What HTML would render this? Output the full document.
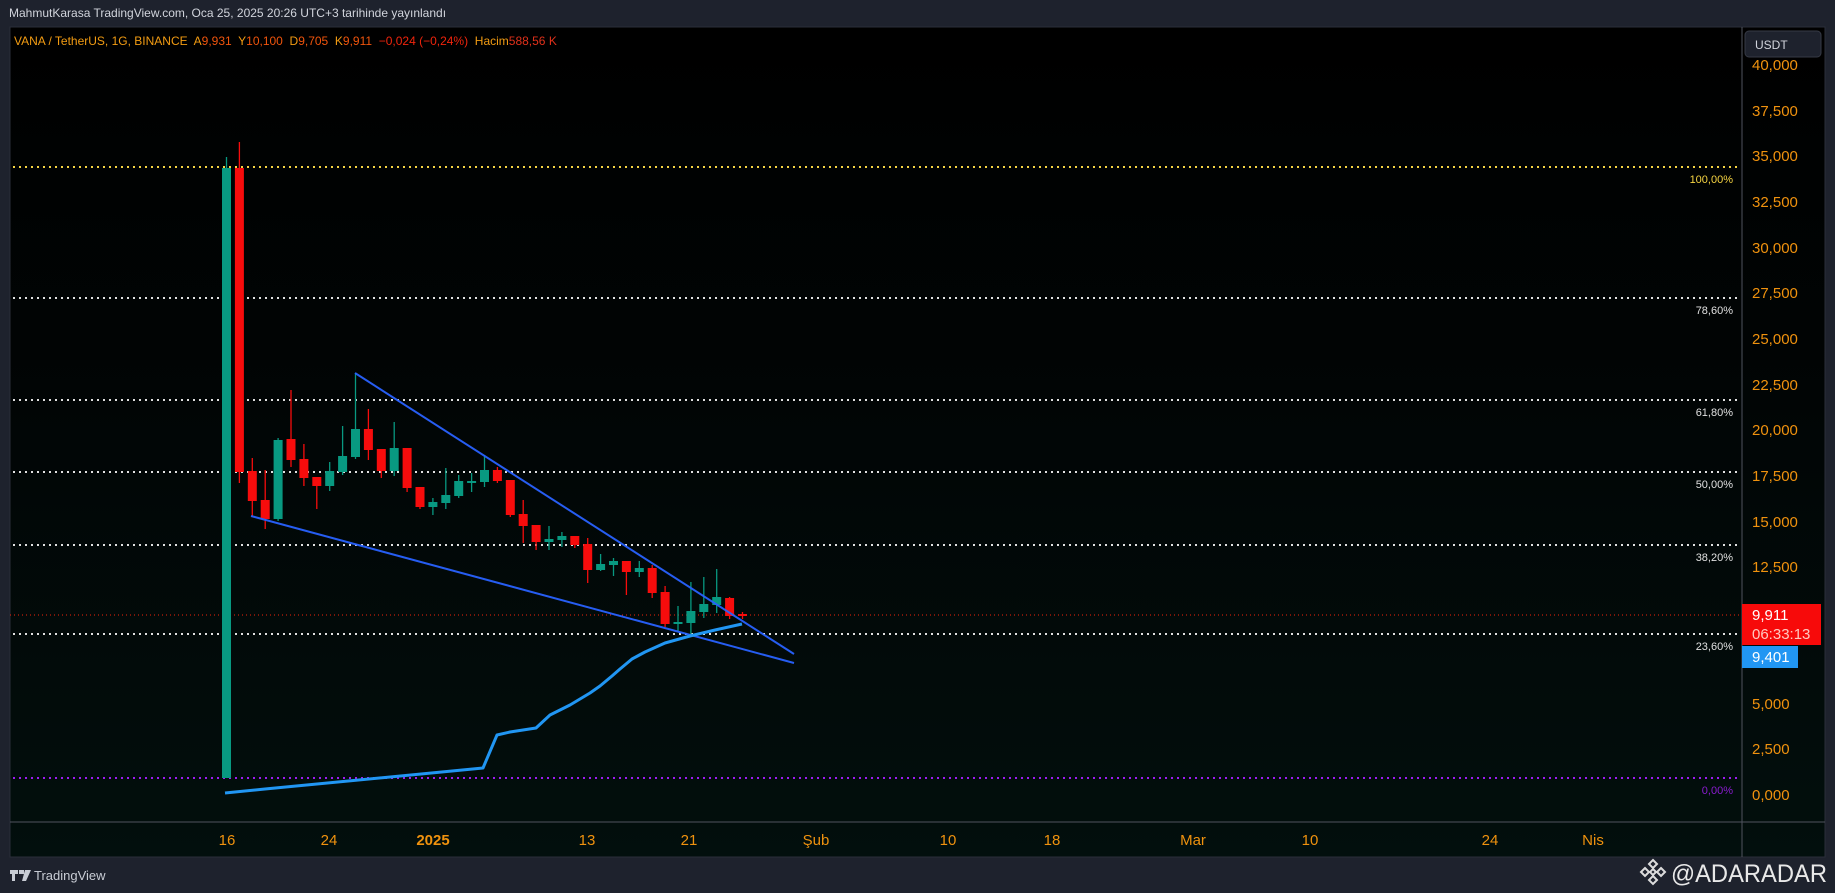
<!DOCTYPE html>
<html><head><meta charset="utf-8"><style>
html,body{margin:0;padding:0;background:#1e222d;width:1835px;height:893px;overflow:hidden;font-family:"Liberation Sans",sans-serif}
svg{position:absolute;left:0;top:0}
</style></head><body>
<svg width="1835" height="893" viewBox="0 0 1835 893" xmlns="http://www.w3.org/2000/svg" font-family="Liberation Sans, sans-serif">
<defs><linearGradient id="bg" x1="0" y1="0" x2="0" y2="1"><stop offset="0" stop-color="#000"/><stop offset="0.45" stop-color="#010505"/><stop offset="1" stop-color="#020f0d"/></linearGradient></defs>
<rect width="1835" height="893" fill="#1e222d"/>
<text x="9" y="17" font-size="12" fill="#d1d4dc">MahmutKarasa TradingView.com, Oca 25, 2025 20:26 UTC+3 tarihinde yayınlandı</text>
<rect x="10" y="27" width="1815" height="830" fill="url(#bg)" stroke="#2a2e39"/>
<line x1="1742" y1="27" x2="1742" y2="857" stroke="#50535e"/>
<line x1="10" y1="822" x2="1825" y2="822" stroke="#50535e"/>
<!-- legend -->
<text x="14" y="45" font-size="12" fill="#f39c12" style="white-space:pre" xml:space="preserve">VANA / TetherUS, 1G, BINANCE  A<tspan fill="#f0540c">9,931</tspan>  Y<tspan fill="#f0540c">10,100</tspan>  D<tspan fill="#f0540c">9,705</tspan>  K<tspan fill="#f0540c">9,911</tspan>  <tspan fill="#f0240c">−0,024 (−0,24%)</tspan>  Hacim<tspan fill="#e0301a">588,56 K</tspan></text>
<!-- USDT -->
<rect x="1745" y="31" width="76" height="26" rx="4" fill="#1e222d" stroke="#363a45"/>
<text x="1755" y="49" font-size="12" fill="#d1d4dc">USDT</text>
<!-- price axis -->
<g font-size="15" fill="#f0920e">
<text x="1752" y="70">40,000</text><text x="1752" y="116">37,500</text><text x="1752" y="161">35,000</text><text x="1752" y="207">32,500</text><text x="1752" y="253">30,000</text><text x="1752" y="298">27,500</text><text x="1752" y="344">25,000</text><text x="1752" y="390">22,500</text><text x="1752" y="435">20,000</text><text x="1752" y="481">17,500</text><text x="1752" y="527">15,000</text><text x="1752" y="572">12,500</text><text x="1752" y="709">5,000</text><text x="1752" y="754">2,500</text><text x="1752" y="800">0,000</text>
</g>
<!-- fib lines -->
<g stroke-width="2" stroke-dasharray="2 4">
<line x1="13" y1="167" x2="1740" y2="167" stroke="#f5d442"/>
<line x1="13" y1="298" x2="1740" y2="298" stroke="#e0e0e0"/>
<line x1="13" y1="400" x2="1740" y2="400" stroke="#e0e0e0"/>
<line x1="13" y1="472" x2="1740" y2="472" stroke="#e0e0e0"/>
<line x1="13" y1="545" x2="1740" y2="545" stroke="#e0e0e0"/>
<line x1="13" y1="634" x2="1740" y2="634" stroke="#e0e0e0"/>
<line x1="13" y1="778" x2="1740" y2="778" stroke="#9c1cf0"/>
</g>
<line x1="10" y1="615" x2="1740" y2="615" stroke="#f0240c" stroke-dasharray="1 3"/>
<g font-size="11" text-anchor="end">
<text x="1733" y="183" fill="#f5d442">100,00%</text>
<text x="1733" y="314" fill="#e0e0e0">78,60%</text>
<text x="1733" y="416" fill="#e0e0e0">61,80%</text>
<text x="1733" y="488" fill="#e0e0e0">50,00%</text>
<text x="1733" y="561" fill="#e0e0e0">38,20%</text>
<text x="1733" y="650" fill="#e0e0e0">23,60%</text>
<text x="1733" y="794" fill="#8a1cd0">0,00%</text>
</g>
<!-- tags -->
<rect x="1742" y="604" width="79" height="41" fill="#f70a0a"/>
<text x="1752" y="620" font-size="15" fill="#fff">9,911</text>
<text x="1752" y="639" font-size="15" fill="#ffc8c0">06:33:13</text>
<rect x="1742" y="646" width="56" height="22" fill="#2196f3"/>
<text x="1752" y="662" font-size="15" fill="#fff">9,401</text>
<!-- time axis -->
<g font-size="15" fill="#f0920e" text-anchor="middle">
<text x="227" y="845">16</text><text x="329" y="845">24</text><text x="433" y="845" font-weight="bold">2025</text><text x="587" y="845">13</text><text x="689" y="845">21</text><text x="816" y="845">Şub</text><text x="948" y="845">10</text><text x="1052" y="845">18</text><text x="1193" y="845">Mar</text><text x="1310" y="845">10</text><text x="1490" y="845">24</text><text x="1593" y="845">Nis</text>
</g>
<!-- candles -->
<g stroke-width="1.3">
<g fill="#089981" stroke="#089981">
<line x1="226.5" y1="157" x2="226.5" y2="778"/><rect x="222" y="168" width="9" height="610" stroke="none"/>
<line x1="278.1" y1="438" x2="278.1" y2="521"/><rect x="273.6" y="440" width="9" height="79" stroke="none"/>
<line x1="329.7" y1="462" x2="329.7" y2="491"/><rect x="325.2" y="471" width="9" height="15" stroke="none"/>
<line x1="342.6" y1="426" x2="342.6" y2="475"/><rect x="338.1" y="456" width="9" height="16" stroke="none"/>
<line x1="355.5" y1="373" x2="355.5" y2="459"/><rect x="351" y="429" width="9" height="28" stroke="none"/>
<line x1="394.2" y1="422" x2="394.2" y2="476"/><rect x="389.7" y="448" width="9" height="23" stroke="none"/>
<line x1="432.9" y1="498" x2="432.9" y2="515"/><rect x="428.4" y="502" width="9" height="5" stroke="none"/>
<line x1="445.8" y1="468" x2="445.8" y2="509"/><rect x="441.3" y="495" width="9" height="8" stroke="none"/>
<line x1="458.7" y1="475" x2="458.7" y2="498"/><rect x="454.2" y="481" width="9" height="15" stroke="none"/>
<line x1="471.6" y1="473" x2="471.6" y2="492"/><rect x="467.1" y="481" width="9" height="2" stroke="none"/>
<line x1="484.5" y1="455" x2="484.5" y2="487"/><rect x="480" y="470" width="9" height="12" stroke="none"/>
<line x1="549" y1="526" x2="549" y2="550"/><rect x="544.5" y="539" width="9" height="3" stroke="none"/>
<line x1="561.9" y1="532" x2="561.9" y2="547"/><rect x="557.4" y="536" width="9" height="4" stroke="none"/>
<line x1="600.6" y1="554" x2="600.6" y2="571"/><rect x="596.1" y="564" width="9" height="6" stroke="none"/>
<line x1="613.5" y1="558" x2="613.5" y2="576"/><rect x="609" y="561" width="9" height="4" stroke="none"/>
<line x1="639.3" y1="561" x2="639.3" y2="577"/><rect x="634.8" y="568" width="9" height="4" stroke="none"/>
<line x1="678" y1="606" x2="678" y2="631"/><rect x="673.5" y="622" width="9" height="2" stroke="none"/>
<line x1="690.9" y1="582" x2="690.9" y2="634"/><rect x="686.4" y="611" width="9" height="12" stroke="none"/>
<line x1="703.8" y1="577" x2="703.8" y2="618"/><rect x="699.3" y="604" width="9" height="8" stroke="none"/>
<line x1="716.7" y1="569" x2="716.7" y2="613"/><rect x="712.2" y="597" width="9" height="8" stroke="none"/>
</g>
<g fill="#f70c0c" stroke="#f70c0c">
<line x1="239.4" y1="142" x2="239.4" y2="483"/><rect x="234.9" y="168" width="9" height="304" stroke="none"/>
<line x1="252.3" y1="458" x2="252.3" y2="517"/><rect x="247.8" y="471" width="9" height="30" stroke="none"/>
<line x1="265.2" y1="470" x2="265.2" y2="529"/><rect x="260.7" y="500" width="9" height="19" stroke="none"/>
<line x1="291" y1="390" x2="291" y2="467"/><rect x="286.5" y="439" width="9" height="21" stroke="none"/>
<line x1="303.9" y1="444" x2="303.9" y2="486"/><rect x="299.4" y="459" width="9" height="19" stroke="none"/>
<line x1="316.8" y1="477" x2="316.8" y2="509"/><rect x="312.3" y="477" width="9" height="9" stroke="none"/>
<line x1="368.4" y1="409" x2="368.4" y2="460"/><rect x="363.9" y="429" width="9" height="21" stroke="none"/>
<line x1="381.3" y1="449" x2="381.3" y2="478"/><rect x="376.8" y="449" width="9" height="22" stroke="none"/>
<line x1="407.1" y1="448" x2="407.1" y2="492"/><rect x="402.6" y="448" width="9" height="40" stroke="none"/>
<line x1="420" y1="487" x2="420" y2="509"/><rect x="415.5" y="487" width="9" height="20" stroke="none"/>
<line x1="497.4" y1="467" x2="497.4" y2="483"/><rect x="492.9" y="470" width="9" height="11" stroke="none"/>
<line x1="510.3" y1="480" x2="510.3" y2="517"/><rect x="505.8" y="480" width="9" height="35" stroke="none"/>
<line x1="523.2" y1="500" x2="523.2" y2="543"/><rect x="518.7" y="514" width="9" height="12" stroke="none"/>
<line x1="536.1" y1="525" x2="536.1" y2="550"/><rect x="531.6" y="525" width="9" height="17" stroke="none"/>
<line x1="574.8" y1="536" x2="574.8" y2="548"/><rect x="570.3" y="536" width="9" height="9" stroke="none"/>
<line x1="587.7" y1="538" x2="587.7" y2="583"/><rect x="583.2" y="544" width="9" height="26" stroke="none"/>
<line x1="626.4" y1="561" x2="626.4" y2="595"/><rect x="621.9" y="561" width="9" height="11" stroke="none"/>
<line x1="652.2" y1="565" x2="652.2" y2="598"/><rect x="647.7" y="568" width="9" height="25" stroke="none"/>
<line x1="665.1" y1="586" x2="665.1" y2="627"/><rect x="660.6" y="592" width="9" height="32" stroke="none"/>
<line x1="729.6" y1="597" x2="729.6" y2="619"/><rect x="725.1" y="598" width="9" height="18" stroke="none"/>
<line x1="742.5" y1="612" x2="742.5" y2="619"/><rect x="738" y="614" width="9" height="2" stroke="none"/>
</g>
</g>
<!-- trendlines -->
<g stroke="#2962ff" stroke-width="2" fill="none" opacity="0.95">
<line x1="355" y1="373" x2="794" y2="654"/>
<line x1="251" y1="516" x2="794" y2="663"/>
</g>
<!-- MA -->
<polyline fill="none" stroke="#2196f3" stroke-width="3" stroke-linejoin="round" points="225,793 265,789 483,768 497,735 510,732 536,728 550,715 570,705 590,693 600,686 612,676 620,669 632,659 645,652 665,643 690,636 715,630 742,624"/>
<!-- bottom bar -->
<g fill="#c8ccd4">
<path d="M10 870h8v4h-3v7h-3v-7h-2z M19 870h5v4h-5z M25 870h6l-5 11h-4z"/>
</g>
<text x="34" y="880" font-size="13" fill="#c8ccd4">TradingView</text>
<g transform="translate(1653,872)">
<path d="M0 -12 L4 -8 L0 -4 L-4 -8Z M-8 -4 L-4 0 L-8 4 L-12 0Z M8 -4 L12 0 L8 4 L4 0Z M0 4 L4 8 L0 12 L-4 8Z M0 -3 L3 0 L0 3 L-3 0Z" fill="none" stroke="#dcdcdc" stroke-width="2"/>
</g>
<text x="1671" y="882" font-size="25" fill="#e8e8e8" textLength="156" lengthAdjust="spacingAndGlyphs">@ADARADAR</text>
</svg>
</body></html>
